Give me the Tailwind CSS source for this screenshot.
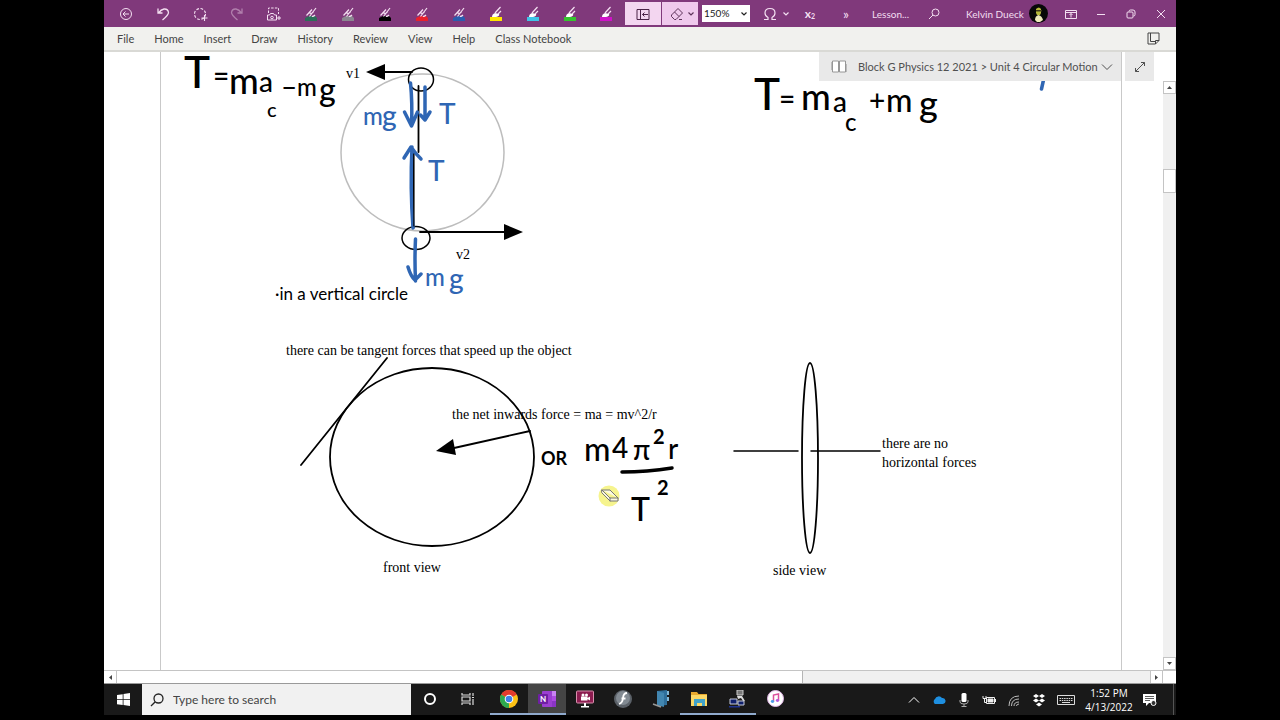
<!DOCTYPE html>
<html lang="en">
  <head>
    <meta charset="UTF-8">
    <meta name="viewport" content="width=device-width, initial-scale=1.0" />
    <title>Lesson - OneNote</title>
    <script src="https://cdn.jsdelivr.net/npm/@tailwindcss/browser@4"></script>
  </head>

  <body class="bg-black font-['Lato','Open_Sans',sans-serif]">
    <svg class="hidden">
      <defs>
        <symbol id="pen" viewBox="0 0 20 20">
          <path d="M4 14l4-2h6l2 2v3H4z" fill="currentColor" />
          <path d="M5.500 11.500l5.500-6M8.500 12.500L15 4M8 8.500q2.500 2 4.500-.500M11 12q1 1 3-1" fill="none" stroke="#f3dff1" stroke-width="1.200" />
        </symbol>
        <symbol id="marker" viewBox="0 0 20 20">
          <path d="M4 13h12v4H4z" fill="currentColor" />
          <path d="M6 13q0-3 3-4l4 1q1 2-3 3z" fill="#fff" />
          <path d="M9 9l5.500-6M12 10l3-3" fill="none" stroke="#f3dff1" stroke-width="1.200" />
        </symbol>
        <symbol id="caret" viewBox="0 0 8 8">
          <path d="M1.500 2.500L4 5l2.500-2.500" fill="none" stroke="currentColor" stroke-width="1.200" />
        </symbol>
      </defs>
    </svg>

    <div class="flex h-screen flex-col px-[104px] pb-[5px]">
      <!-- title bar -->
      <header class="flex h-[27px] shrink-0 items-center bg-[#80397b] text-[#f3dff1]">
        <div class="flex w-[521px] shrink-0 pl-1 *:flex *:h-[27px] *:flex-1 *:items-center *:justify-center">
          <button aria-label="Back"><svg class="size-4" viewBox="0 0 16 16" fill="none" stroke="currentColor"><circle cx="8" cy="8" r="5.500" /><path d="M11 8H5M7.500 5.500L5 8l2.500 2.500" /></svg></button>
          <button aria-label="Undo"><svg class="size-4" viewBox="0 0 16 16" fill="none" stroke="currentColor" stroke-width="1.300"><path d="M3 2.500v4.500h4.500M3.500 7Q6 3.500 9 3q4-.3 4.500 3.500Q13.500 9 7.500 14" /></svg></button>
          <button aria-label="Lasso select"><svg class="size-4" viewBox="0 0 16 16" fill="none" stroke="currentColor" stroke-width="1.100"><circle cx="8" cy="8" r="5.500" stroke-dasharray="2.700 1.600" /><path d="M12.500 9v6M9.500 12h6" /></svg></button>
          <button aria-label="Redo" class="text-[#b07fac]"><svg class="size-4" viewBox="0 0 16 16" fill="none" stroke="currentColor" stroke-width="1.300"><path d="M13 2.500v4.500H8.500M12.500 7Q10 3.500 7 3q-4-.3-4.500 3.500Q2.500 9 8.500 14" /></svg></button>
          <button aria-label="Screen clipping"><svg class="size-4" viewBox="0 0 16 16" fill="none" stroke="currentColor"><path d="M2.500 7V2h10v6" stroke-dasharray="2.500 1.300" /><path d="M1.500 9h2l1-1.500h3L8.500 9h2v5h-9z" /><circle cx="6" cy="11.500" r="1.300" /><path d="M13 10v4M11 12h4" /></svg></button>
          <button aria-label="Green pen" class="text-[#2c6e58]"><svg class="size-5"><use href="#pen" /></svg></button>
          <button aria-label="Gray pen" class="text-[#8b8790]"><svg class="size-5"><use href="#pen" /></svg></button>
          <button aria-label="Black pen" class="text-black"><svg class="size-5"><use href="#pen" /></svg></button>
          <button aria-label="Red pen" class="text-[#e8202d]"><svg class="size-5"><use href="#pen" /></svg></button>
          <button aria-label="Blue pen" class="text-[#2b5cae]"><svg class="size-5"><use href="#pen" /></svg></button>
          <button aria-label="Yellow highlighter" class="text-[#ffe500]"><svg class="size-5"><use href="#marker" /></svg></button>
          <button aria-label="Cyan highlighter" class="text-[#3fc4e8]"><svg class="size-5"><use href="#marker" /></svg></button>
          <button aria-label="Green highlighter" class="text-[#35c42e]"><svg class="size-5"><use href="#marker" /></svg></button>
          <button aria-label="Magenta highlighter" class="text-[#cf12c8]"><svg class="size-5"><use href="#marker" /></svg></button>
        </div>
        <button aria-label="Dock to desktop" class="flex h-[23px] w-9 shrink-0 items-center justify-center bg-[#f3d6f0] text-[#4a2347]"><svg class="size-4" viewBox="0 0 16 16" fill="none" stroke="currentColor"><path d="M2 3.500h12v10H2zM5.500 3.500v10M13 8.500H7.500M9.500 6.500l-2 2 2 2" /></svg></button>
        <button aria-label="Eraser" class="ml-px flex h-[23px] w-9 shrink-0 items-center justify-center gap-0.5 bg-[#efc9ec] text-[#5d3359]"><svg class="ml-1 size-4" viewBox="0 0 16 16" fill="none" stroke="currentColor"><path d="M2.500 9L9 2.500l4.500 4.500L7 13.500H5.500L2.500 10.500zM5.500 6l4.500 4.500M10 13.500h3" /></svg><svg class="size-2"><use href="#caret" /></svg></button>
        <div class="relative ml-1 flex shrink-0 items-center">
          <select aria-label="Zoom" class="h-[17px] w-12 appearance-none bg-white pl-0.5 text-[10px] leading-[17px] text-[#222]"><option>150%</option></select>
          <svg class="pointer-events-none absolute right-0.5 size-2 text-[#222]"><use href="#caret" /></svg>
        </div>
        <button aria-label="Symbol" class="ml-3 flex w-7 shrink-0 items-center gap-1"><svg class="size-4" viewBox="0 0 16 16" fill="none" stroke="currentColor" stroke-width="1.200"><path d="M2 13.500h4v-2Q3 10 3 7q0-4.500 5-4.500T13 7q0 3-3 4.500v2h4" /></svg><svg class="size-2"><use href="#caret" /></svg></button>
        <button aria-label="Subscript" class="ml-3 w-4 shrink-0 text-[12px] leading-4 font-bold">x<sub class="text-[7px]">2</sub></button>
        <button aria-label="More" class="ml-4 w-6 shrink-0 text-[14px] leading-4">»</button>
        <div class="ml-auto flex shrink-0 items-center">
          <span class="w-14 text-[10px] leading-4">Lesson...</span>
          <button aria-label="Search"><svg class="size-3" viewBox="0 0 12 12" fill="none" stroke="currentColor"><circle cx="7.500" cy="4.500" r="3.500" /><path d="M5 7L1 11" /></svg></button>
          <span class="ml-[26px] w-[63px] text-[10px] leading-4 whitespace-nowrap">Kelvin Dueck</span>
          <svg class="size-[19px]" viewBox="0 0 19 19"><circle cx="9.500" cy="9.500" r="9.500" fill="#080808" /><path d="M7 5q3-3 5 0v4l-1 2H8L7 9z" fill="#b6b93a" /><path d="M7 6h6v1.500H7z" fill="#423c1b" /><path d="M6 16q0-4 3.500-5 3.500 1 4.500 5l-3 2H8z" fill="#eeeabc" /></svg>
          <div class="ml-2 flex *:flex *:h-[27px] *:w-[30px] *:items-center *:justify-center">
            <button aria-label="Ribbon display"><svg class="size-3" viewBox="0 0 12 12" fill="none" stroke="currentColor"><path d="M.5 2.500h11v8H.5zM.5 4.500h11M6 9.500v-4M4.500 7L6 5.500 7.500 7" /></svg></button>
            <button aria-label="Minimize"><svg class="size-3" viewBox="0 0 12 12" stroke="currentColor"><path d="M2 6.500h8" /></svg></button>
            <button aria-label="Restore"><svg class="size-3" viewBox="0 0 12 12" fill="none" stroke="currentColor"><rect x="2" y="4" width="6" height="6" rx="1" /><path d="M4 3.500q0-1.500 1.500-1.500H8q2 0 2 2v2.500q0 1.500-1.500 1.500" /></svg></button>
            <button aria-label="Close"><svg class="size-3" viewBox="0 0 12 12" stroke="currentColor"><path d="M2 2l8 8M10 2l-8 8" /></svg></button>
          </div>
        </div>
      </header>

      <!-- ribbon tabs -->
      <nav class="flex h-[25px] shrink-0 items-center border-b-2 border-[#d9d9d5] bg-[#f1f1ee] pr-4 pl-[13px] text-[11px] leading-4 text-[#444]">
        <div class="flex gap-5 whitespace-nowrap">
          <a href="#">File</a>
          <a href="#">Home</a>
          <a href="#">Insert</a>
          <a href="#">Draw</a>
          <a href="#">History</a>
          <a href="#">Review</a>
          <a href="#">View</a>
          <a href="#">Help</a>
          <a href="#">Class Notebook</a>
        </div>
        <button aria-label="Sticky notes" class="ml-auto"><svg class="size-[13px]" viewBox="0 0 13 13" fill="none" stroke="#444"><path d="M1 1h11v7.500L8.500 12H1zM12 8.500H8.500V12M3.500 1v8.500H8" /></svg></button>
      </nav>

      <main class="relative flex min-h-0 flex-1 bg-white">
        <!-- note page -->
        <svg class="h-full min-w-0 flex-1" role="img" aria-label="Circular motion notes">
          <g transform="translate(-104 -52)" fill="none" stroke="#000" stroke-linecap="round" stroke-linejoin="round">
            <path d="M160.500 52v900M1121.500 52v900" stroke="#c9c9c9" />

            <!-- vertical circle -->
            <ellipse cx="422.500" cy="152.500" rx="81.500" ry="78.500" stroke="#bdbdbd" stroke-width="1.500" />
            <ellipse cx="421" cy="79.500" rx="12.500" ry="11.500" stroke-width="1.500" />
            <ellipse cx="416" cy="238" rx="14" ry="11.500" stroke-width="1.500" />
            <path d="M412 72H384M418.500 86v66M413.500 154v74M420 232h86" stroke-width="1.800" />
            <path d="M366 72l19-8v16zM523 232l-19-8v16z" fill="#000" stroke="none" />
            <g stroke="#2f66b4" stroke-width="3.500">
              <path d="M410.500 83q2 20 1 42M404.500 112l7 14 6-14M425 87v32M420.500 115l4.500 5 5-8" />
              <path d="M413 228q-3-40-1-81M404 158l7-11q4 6 10 12" />
              <path d="M415.500 239q-1 20 0 42M408 267q3 10 7 13l6-6M1043.500 80l-2 9" />
            </g>
            <path d="M413.800 154v72" />

            <!-- front view -->
            <ellipse cx="432" cy="457" rx="102" ry="89" stroke-width="1.800" />
            <path d="M387 358L301 465M530 431l-76 17" stroke-width="1.800" />
            <path d="M436 451l17-12 3 16z" fill="#000" stroke="none" />
            <path d="M622 472q25 0 50-4" stroke-width="3.500" />

            <!-- side view -->
            <ellipse cx="810" cy="458" rx="8" ry="95" stroke-width="1.800" />
            <path d="M734 451h64M811 451h69" stroke-width="1.500" />

            <!-- eraser cursor -->
            <circle cx="609" cy="496" r="10.500" fill="#f6f48e" stroke="none" />
            <path d="M602 490l8 0 8 8v3h-8l-8-8zM602 490l8 8h8M610 498v3" fill="#fbfae0" stroke="#777" />
          </g>
          <g transform="translate(-104 -52)" class="font-['Liberation_Serif',serif] text-[14px]">
            <text x="346" y="78">v1</text>
            <text x="456" y="259">v2</text>
            <text x="286" y="355">there can be tangent forces that speed up the object</text>
            <text x="452" y="419">the net inwards force = ma = mv^2/r</text>
            <text x="383" y="572">front view</text>
            <text x="773" y="575">side view</text>
            <text x="882" y="448">there are no</text>
            <text x="882" y="467">horizontal forces</text>
          </g>
          <text transform="translate(-104 -52)" x="275" y="300" class="text-[17px]">·in a vertical circle</text>
          <!-- ink -->
          <g transform="translate(-104 -52)" class="text-[28px] font-medium">
            <text x="184" y="88" class="text-[44px]">T</text>
            <text x="213" y="86">=</text>
            <text x="229" y="94" class="text-[36px]">m</text>
            <text x="259" y="92">a</text>
            <text x="267" y="117" class="text-[20px]">c</text>
            <text x="281" y="97">–</text>
            <text x="297" y="96" class="text-[24px]">m</text>
            <text x="319" y="101" class="text-[32px]">g</text>
            <text x="754" y="110" class="text-[44px]">T</text>
            <text x="779" y="109">=</text>
            <text x="801" y="110" class="text-[36px]">m</text>
            <text x="833" y="112">a</text>
            <text x="845" y="131" class="text-[24px]">c</text>
            <text x="869" y="111">+</text>
            <text x="886" y="112" class="text-[32px]">m</text>
            <text x="919" y="117" class="text-[36px]">g</text>
            <text x="541" y="465" class="text-[18px] font-bold">OR</text>
            <text x="584" y="461" class="text-[32px]">m</text>
            <text x="612" y="458">4</text>
            <text x="633" y="460">π</text>
            <text x="653" y="444" class="text-[20px] font-bold">2</text>
            <text x="668" y="459">r</text>
            <text x="631" y="521" class="text-[32px]">T</text>
            <text x="657" y="495" class="text-[20px] font-bold">2</text>
            <g fill="#2f66b4">
              <text x="363" y="125" class="text-[24px]">m</text>
              <text x="382" y="126">g</text>
              <text x="439" y="124">T</text>
              <text x="428" y="181">T</text>
              <text x="425" y="286" class="text-[24px]">m</text>
              <text x="449" y="289">g</text>
            </g>
          </g>
        </svg>

        <!-- vertical scrollbar -->
        <div class="flex w-[13px] shrink-0 flex-col pt-[29px]" aria-hidden="true">
          <div class="flex h-[13px] items-center justify-center border border-[#c4c4c4] bg-white"><svg class="size-[5px]" viewBox="0 0 5 5"><path d="M0 4l2.500-3L5 4z" fill="#444" /></svg></div>
          <div class="h-[75px] bg-[#f0f0f0]"></div>
          <div class="h-6 border border-[#c4c4c4] bg-white"></div>
          <div class="flex-1 bg-[#f0f0f0]"></div>
          <div class="flex h-[13px] items-center justify-center border border-[#c4c4c4] bg-white"><svg class="size-[5px]" viewBox="0 0 5 5"><path d="M0 1l2.500 3L5 1z" fill="#444" /></svg></div>
        </div>

        <!-- section switcher, floats over the page -->
        <div class="absolute top-0 right-[22px] flex h-[29px] gap-1 text-[#505050]">
          <button class="flex w-[302px] items-center bg-[#e9e9e9] pl-3 text-[11px] leading-4 whitespace-nowrap">
            <svg class="h-[13px] w-4 shrink-0" viewBox="0 0 16 13" fill="#fff" stroke="#969696"><path d="M1.500 1h6v11h-6zM8.500 1h6v11h-6z" /><path d="M.5 2v8M15.500 4v8" stroke="#bbb" /></svg>
            <span class="ml-[11px]">Block G Physics 12 2021 &gt; Unit 4 Circular Motion</span>
            <svg class="mr-2 ml-auto h-2 w-3 shrink-0" viewBox="0 0 12 8" fill="none" stroke="currentColor"><path d="M1 1.500l5 5 5-5" /></svg>
          </button>
          <button aria-label="Full page view" class="flex w-[29px] items-center justify-center bg-[#e9e9e9]"><svg class="size-3" viewBox="0 0 12 12" fill="none" stroke="currentColor"><path d="M1.500 10.500l9-9M7 1.500h3.500V5M5 10.500H1.500V7" /></svg></button>
        </div>
      </main>

      <!-- horizontal scrollbar -->
      <div class="flex h-[14px] shrink-0 border-t border-b border-t-[#c4c4c4] border-b-[#9a9a9a] bg-white" aria-hidden="true">
        <div class="flex w-[13px] items-center justify-center border-r border-[#c4c4c4]"><svg class="size-[5px]" viewBox="0 0 5 5"><path d="M4 0L1 2.500 4 5z" fill="#444" /></svg></div>
        <div class="w-[64%] border-r border-[#b5b5b5]"></div>
        <div class="flex-1 bg-[#f0f0f0]"></div>
        <div class="flex w-[13px] items-center justify-center border-x border-[#c4c4c4]"><svg class="size-[5px]" viewBox="0 0 5 5"><path d="M1 0l3 2.500L1 5z" fill="#444" /></svg></div>
        <div class="w-[13px]"></div>
      </div>

      <!-- taskbar -->
      <footer class="flex h-[31px] shrink-0 bg-[#191919] text-white">
        <button aria-label="Start" class="flex w-[38px] shrink-0 items-center justify-center"><svg class="size-[13px]" viewBox="0 0 13 13" fill="#fff"><path d="M0 2l5.700-.8v5H0zM6.500 1L13 0v6.200H6.500zM0 7h5.700v5L0 11.200zM6.500 7H13v6l-6.500-.9z" /></svg></button>
        <label class="flex w-[269px] shrink-0 items-center bg-[#f1f1f1] pl-2 text-[#222]">
          <svg class="size-[14px] shrink-0" viewBox="0 0 14 14" fill="none" stroke="currentColor" stroke-width="1.300"><circle cx="8.500" cy="5.500" r="4.500" /><path d="M5.300 8.700L1 13" /></svg>
          <input type="text" aria-label="Search" placeholder="Type here to search" class="ml-[9px] min-w-0 flex-1 text-[12px] leading-4 outline-none placeholder:text-[#444]" />
        </label>
        <div class="flex shrink-0 *:flex *:h-[31px] *:w-[38px] *:items-center *:justify-center *:border-b-2 *:border-transparent">
          <button aria-label="Cortana"><svg class="size-[14px]" viewBox="0 0 14 14" fill="none" stroke="#fff" stroke-width="2"><circle cx="7" cy="7" r="5" /></svg></button>
          <button aria-label="Task view"><svg class="size-[14px]" viewBox="0 0 14 14" fill="none" stroke="#ddd" stroke-width="1.200"><path d="M1 1v2h8V1M1 13v-2h8v2M1 5h8v4H1zM12 1v3M12 7v6M11 5.500h2" /></svg></button>
          <button aria-label="Chrome" class="ml-[3px] border-[#8fa9cc]!"><svg class="size-[18px]" viewBox="0 0 18 18"><circle cx="9" cy="9" r="9" fill="#fbc116" /><path d="M9 9L1.200 4.500A9 9 0 0 1 16.800 4.500z" fill="#e33b2e" /><path d="M9 9L9 18A9 9 0 0 1 1.200 4.500z" fill="#2da94f" /><circle cx="9" cy="9" r="4.300" fill="#fff" /><circle cx="9" cy="9" r="3.300" fill="#3f7fe8" /></svg></button>
          <button aria-label="OneNote" class="border-[#8fa9cc]! bg-[#454545]"><svg class="size-[18px]" viewBox="0 0 18 18"><rect x="4" y="1" width="14" height="16" rx="1" fill="#9b3fd0" /><path d="M14 1h4v5h-4z" fill="#c983f2" /><path d="M14 6h4v5h-4z" fill="#ae4be2" /><path d="M14 11h4v6h-4z" fill="#8a34c4" /><rect y="4" width="10" height="10" rx="1" fill="#6f1fa3" /><text x="2" y="12" font-size="8" font-weight="700" fill="#fff">N</text></svg></button>
          <button aria-label="Screen recorder"><svg class="size-[18px]" viewBox="0 0 18 18"><rect x=".5" y="1" width="17" height="12" rx="1" fill="#8c1d50" stroke="#d890ad" /><circle cx="7" cy="5" r="1.500" fill="#fff" /><circle cx="10.500" cy="5" r="1.500" fill="#fff" /><path d="M5 6.500h6.500v4H5zM11.500 8l2.500-1.500v4L11.500 9zM8 13h2v3h3v1.500H5V16h3z" fill="#fff" /></svg></button>
          <button aria-label="Flash player"><svg class="size-[18px]" viewBox="0 0 18 18"><circle cx="9" cy="9" r="9" fill="#5b6168" /><circle cx="9" cy="8" r="7" fill="#828a92" /><path d="M13 3q-3.500 0-4 5t-4 6M7.500 8.500h4" fill="none" stroke="#fff" stroke-width="1.800" /></svg></button>
          <button aria-label="Notebook"><svg class="size-[18px]" viewBox="0 0 18 18"><path d="M5 1l10-1v15L6 16z" fill="#2f6f9b" /><path d="M5 1l7 2v14l-7-2z" fill="#4286b0" /><path d="M15 1h2v4h-2zM15 7h2v4h-2z" fill="#83b8d8" /><path d="M1 14l8 3" stroke="#999" stroke-width="1.500" /></svg></button>
          <button aria-label="File Explorer" class="border-[#8fa9cc]!"><svg class="size-[18px]" viewBox="0 0 18 18"><path d="M1 2h6l1.500 2H17v12H1z" fill="#e8a92f" /><path d="M1 5h16v11H1z" fill="#fbd867" /><path d="M4 9h11v7h-3v-3H7v3H4z" fill="#42a3c9" /></svg></button>
          <button aria-label="Remote computers" class="border-[#8fa9cc]!"><svg class="size-[18px]" viewBox="0 0 18 18"><path d="M9 0h6v5H9z" fill="#777" stroke="#ccc" /><path d="M9 6h5l3 5h-2l-2-3-3 1z" fill="#ddd" /><path d="M2 9h7v5H2zM10 11h6v4h-6z" fill="#10206c" stroke="#c6cad8" /><path d="M1 16h11v1.500H1z" fill="#1e3393" /></svg></button>
          <button aria-label="iTunes"><svg class="size-[17px]" viewBox="0 0 17 17"><circle cx="8.500" cy="8.500" r="8" fill="#fff" stroke="#dfb4e5" /><path d="M6.500 11.500V5l5-1v6.500" fill="none" stroke="#db4f9c" stroke-width="1.500" /><ellipse cx="5.500" cy="11.500" rx="1.700" ry="1.400" fill="#4c9de8" /><ellipse cx="10.500" cy="10.500" rx="1.700" ry="1.400" fill="#b45add" /></svg></button>
        </div>
        <div class="ml-auto flex shrink-0 items-center">
          <div class="flex *:flex *:w-[25px] *:justify-center">
            <button aria-label="Hidden icons"><svg class="size-[14px]" viewBox="0 0 14 14" fill="none" stroke="#fff"><path d="M2 9.500l5-5 5 5" /></svg></button>
            <button aria-label="OneDrive"><svg class="size-[14px]" viewBox="0 0 14 14"><path d="M3 11a3 3 0 0 1 0-5 4 4 0 0 1 7-1 3 3 0 0 1 1 6z" fill="#1e8fe0" /></svg></button>
            <button aria-label="Microphone"><svg class="size-[14px]" viewBox="0 0 14 14"><rect x="4.500" width="5" height="9" rx="1.500" fill="#fff" /><path d="M3 7v2q0 2 4 2t4-2V7M7 11v2.500M4.500 13.500h5" fill="none" stroke="#aaa" /></svg></button>
            <button aria-label="Battery"><svg class="size-[14px]" viewBox="0 0 14 14" fill="none" stroke="#eee"><path d="M4.500 4.500h8v6h-8zM13.500 6v3M1 3v2.500h3V3M2.500 5.500v4h2" /><path d="M6 6h5v3H6z" fill="#eee" /></svg></button>
            <button aria-label="Wi-Fi"><svg class="size-[14px]" viewBox="0 0 14 14" fill="none" stroke="#bbb"><path d="M2 13Q2 3 12 3M4.500 13q0-7 7.500-7M7 13q0-4 5-4M9.500 13q0-2 2.500-2" /></svg></button>
            <button aria-label="Dropbox"><svg class="size-[14px]" viewBox="0 0 14 14" fill="#fff"><path d="M4 1l3 2-3 2-3-2zM10 1l3 2-3 2-3-2zM4 5.500l3 2-3 2-3-2zM10 5.500l3 2-3 2-3-2zM7 9.500l3 2-3 2-3-2z" /></svg></button>
          </div>
          <button aria-label="Touch keyboard" class="ml-1.5"><svg class="h-3 w-[18px]" viewBox="0 0 18 12" fill="none" stroke="#ddd"><path d="M.5 1.500h17v9H.5z" /><path d="M2.500 4.500h13M2.500 6.500h13" stroke-dasharray="1.500 .8" /><path d="M5 8.500h8" /></svg></button>
          <div class="w-[68px] text-center font-['Open_Sans',sans-serif] text-[10px] leading-[14px] whitespace-nowrap">1:52 PM<br>4/13/2022</div>
          <button aria-label="Notifications"><svg class="size-[14px]" viewBox="0 0 14 14"><path d="M0 1h13v9H6l-3 3v-3H0z" fill="#fff" /><path d="M2 3.500h9M2 5.500h9M2 7.500h5" stroke="#333" stroke-width=".8" /><circle cx="10.500" cy="10" r="2.500" fill="#333" stroke="#fff" /></svg></button>
          <div class="mr-0.5 ml-4 h-[31px] w-px bg-[#555]"></div>
        </div>
      </footer>
    </div>
  </body>
</html>
